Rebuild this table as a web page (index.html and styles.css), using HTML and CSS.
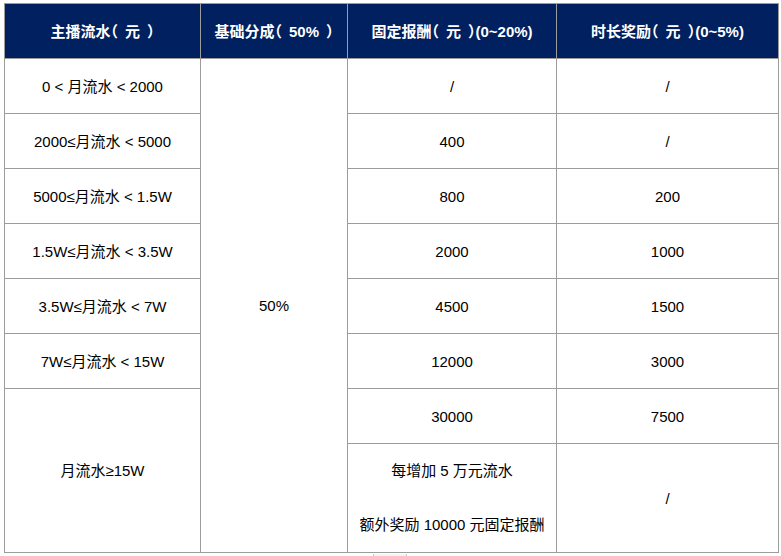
FILE: index.html
```html
<!DOCTYPE html>
<html lang="zh-CN">
<head>
<meta charset="utf-8">
<link rel="stylesheet" href="styles.css">
</head>
<body>
<table class="tbl">
  <colgroup>
    <col class="c1"><col class="c2"><col class="c3"><col class="c4">
  </colgroup>
  <thead>
    <tr>
      <th>主播流水<span class="op">（</span>元<span class="cp">）</span></th>
      <th>基础分成<span class="op">（</span>50%<span class="cp">）</span></th>
      <th>固定报酬<span class="op">（</span>元<span class="cp">）</span>(0~20%)</th>
      <th>时长奖励<span class="op">（</span>元<span class="cp">）</span>(0~5%)</th>
    </tr>
  </thead>
  <tbody>
    <tr><td>0 &lt; 月流水 &lt; 2000</td><td rowspan="8">50%</td><td>/</td><td>/</td></tr>
    <tr><td>2000≤月流水 &lt; 5000</td><td>400</td><td>/</td></tr>
    <tr><td>5000≤月流水 &lt; 1.5W</td><td>800</td><td>200</td></tr>
    <tr><td>1.5W≤月流水 &lt; 3.5W</td><td>2000</td><td>1000</td></tr>
    <tr><td>3.5W≤月流水 &lt; 7W</td><td>4500</td><td>1500</td></tr>
    <tr><td>7W≤月流水 &lt; 15W</td><td>12000</td><td>3000</td></tr>
    <tr><td rowspan="2">月流水≥15W</td><td>30000</td><td>7500</td></tr>
    <tr class="tall"><td><p class="ln">每增加 5 万元流水</p><p class="ln">额外奖励 10000 元固定报酬</p></td><td>/</td></tr>
  </tbody>
</table>
<div class="stub"></div>
</body>
</html>
```

FILE: styles.css
```css
html, body {
  background: #ffffff;
}
body {
  margin: 3px 0 0 4px;
  font-family: "Liberation Sans", Arial, "Noto Sans CJK SC", sans-serif;
  color: #000;
}
.tbl {
  border-collapse: collapse;
  table-layout: fixed;
  width: 774px;
}
.c1 { width: 196px; }
.c2 { width: 147px; }
.c3 { width: 209px; }
.c4 { width: 222px; }
.tbl th, .tbl td {
  border: 1px solid #9c9c9c;
  text-align: center;
  vertical-align: middle;
  padding: 0;
  line-height: 17px;
}
.tbl th {
  background: #002060;
  color: #fff;
  font-size: 15px;
  font-weight: bold;
  height: 54px;
}
.op {
  font-feature-settings: "halt" 1;
  padding-right: 7px;
}
.cp {
  font-feature-settings: "halt" 1;
  padding-left: 7px;
}
.tbl td {
  font-size: 15px;
  height: 54px;
}
.tall td {
  height: 108px;
}
.ln {
  margin: 0;
  line-height: 54px;
}
.stub {
  margin: 1px 0 0 369px;
  width: 32px;
  height: 2px;
  border-left: 1px solid #c8c8c8;
  border-right: 1px solid #c8c8c8;
  background: #f4f4f4;
}
```
